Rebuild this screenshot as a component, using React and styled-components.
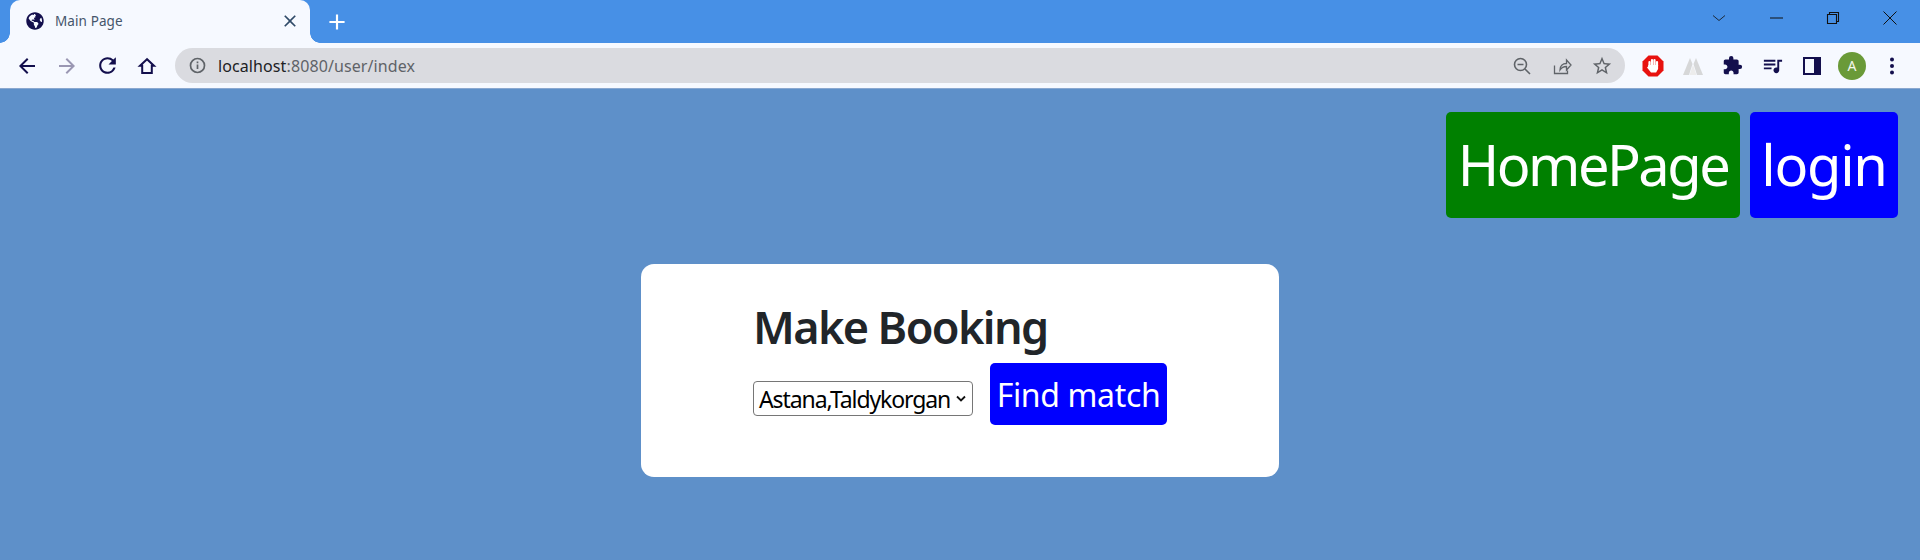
import React from "react";
import styled, { createGlobalStyle } from "styled-components";
import { MdArrowBack, MdArrowForward, MdRefresh, MdExtension, MdQueueMusic, MdStarBorder, MdClose, MdAdd } from "react-icons/md";
import { FaGlobeAmericas } from "react-icons/fa";

const N = "#130f4d";
const Global = createGlobalStyle`
  html, body { margin: 0; padding: 0; background: #5e90c9; }
  body { font-family: "Noto Sans", "Open Sans", sans-serif; overflow: hidden; }
`;
const Page = styled.div`width: 1920px; height: 560px; display: flex; flex-direction: column; overflow: hidden;`;
const TitleBar = styled.div`height: 43px; background: #4790e6; display: flex; align-items: flex-end; padding-left: 10px; flex: none;`;
const Tab = styled.div`
  width: 300px; height: 43px; box-sizing: border-box; background: #f6f9ff; border-radius: 10px 10px 0 0;
  display: flex; align-items: center; padding: 0 10px 2px 16px; position: relative;
  &::before, &::after { content: ""; position: absolute; bottom: 0; width: 10px; height: 10px; }
  &::before { left: -10px; background: radial-gradient(circle at 0 0, #4790e6 9.5px, #f6f9ff 10px); }
  &::after { right: -10px; background: radial-gradient(circle at 100% 0, #4790e6 9.5px, #f6f9ff 10px); }
`;
const TabTitle = styled.span`font-size: 13.5px; color: #45556b; margin-left: 11px; flex: 1; letter-spacing: 0.1px;`;
const NewTab = styled.div`margin-left: 12px; height: 43px; width: 30px; display: flex; align-items: center; justify-content: center;`;
const WindowControls = styled.div`margin-left: auto; height: 43px; display: flex; align-items: flex-start; padding-right: 2px;`;
const WinButton = styled.div`width: 57px; height: 36px; display: flex; align-items: center; justify-content: center;`;
const Toolbar = styled.div`height: 45px; background: #f6f9ff; display: flex; align-items: center; padding-left: 7px; flex: none; box-sizing: border-box;`;
const NavButton = styled.div`width: 40px; height: 34px; display: flex; align-items: center; justify-content: center; color: ${p => p.$c || N};`;
const UrlBar = styled.div`
  width: 1450px; height: 35px; margin-left: 8px; border-radius: 18px; background: #dadbe0; display: flex; align-items: center; padding: 0 3px 0 14px; box-sizing: border-box; flex: none;
`;
const UrlText = styled.div`font-size: 16px; color: #5f6368; margin-left: 12px; flex: 1; letter-spacing: 0.1px;`;
const Host = styled.span`color: #202124;`;
const UrlAction = styled.div`width: 40px; display: flex; align-items: center; justify-content: center; color: #5f6368;`;
const Extensions = styled.div`display: flex; align-items: center; margin-left: 8px;`;
const ExtButton = styled.div`width: 39.8px; height: 34px; display: flex; align-items: center; justify-content: center; color: ${N};`;
const Avatar = styled.div`width: 28px; height: 28px; border-radius: 50%; background: #6a9a38; color: #f3f7ec; font-size: 14px; display: flex; align-items: center; justify-content: center;`;
const Content = styled.main`flex: 1; background: #5e90c9; border-top: 1px solid #8aa8d0; display: flex; flex-direction: column; box-sizing: border-box;`;
const TopLinks = styled.nav`display: flex; justify-content: flex-end; gap: 10px; padding: 23px 22px 0 0;`;
const LinkButton = styled.a`
  height: 106px; box-sizing: border-box; display: flex; align-items: center; justify-content: center;
  background: ${p => p.$bg}; color: #fff; border-radius: 5px; font-size: 56px; font-weight: 400; font-family: "Noto Sans", sans-serif; letter-spacing: ${p => p.$ls}px; width: ${p => p.$w}px; padding-bottom: 2px;
`;
const Card = styled.section`
  width: 638px; height: 213px; box-sizing: border-box; margin: 46px auto 0; background: #fff; border-radius: 13px; padding: 33px 0 0 112px;
`;
const Heading = styled.h2`margin: 0; font-size: 45px; font-weight: 600; line-height: 60px; color: #212529; letter-spacing: -1.6px;`;
const Row = styled.div`display: flex; align-items: flex-start; gap: 17px; margin-top: 6px;`;
const CitySelect = styled.div`
  width: 220px; height: 35px; box-sizing: border-box; border: 1px solid #767676; border-radius: 4px; background: #fff;
  font-size: 23px; color: #000; display: flex; align-items: center; padding: 0 6px 0 5px; letter-spacing: -1.1px; justify-content: space-between; white-space: nowrap; margin-top: 18px; flex: none;
`;
const FindButton = styled.button`
  width: 177px; height: 62px; border: 0; border-radius: 5px; background: #0000ff; color: #fff; font-size: 32px; font-family: "Noto Sans", sans-serif; padding: 0; letter-spacing: -0.35px; white-space: nowrap; flex: none;
`;

const I = ({ w = 20, h = 20, children, vb = "0 0 20 20" }) => (
  <svg width={w} height={h} viewBox={vb} fill="none" style={{ display: "block", flex: "none" }}>{children}</svg>
);

export default function App() {
  return (
    <Page>
      <Global />
      <TitleBar>
        <Tab>
          <FaGlobeAmericas size={18} color={N} style={{ flex: "none" }} />
          <TabTitle>Main Page</TabTitle>
          <MdClose size={20} color="#2f4a68" />
        </Tab>
        <NewTab><MdAdd size={26} color="#fff" /></NewTab>
        <WindowControls>
          <WinButton><I w={14} h={14} vb="0 0 14 14"><path d="M1 4.500l6 5 6-5" stroke="#1c2a3a" strokeWidth="1" /></I></WinButton>
          <WinButton><I w={14} h={14} vb="0 0 14 14"><path d="M1 7h13" stroke="#111" strokeWidth="1" /></I></WinButton>
          <WinButton><I w={14} h={14} vb="0 0 14 14"><path d="M1.500 3.500h9v9h-9zM3.500 3.500v-2h9v9h-2" stroke="#111" strokeWidth="1.100" /></I></WinButton>
          <WinButton><I w={14} h={14} vb="0 0 14 14"><path d="M.5.5l13 13M13.500.5l-13 13" stroke="#111" strokeWidth="1" /></I></WinButton>
        </WindowControls>
      </TitleBar>
      <Toolbar>
        <NavButton><MdArrowBack size={24} /></NavButton>
        <NavButton $c="#9a97b3"><MdArrowForward size={24} /></NavButton>
        <NavButton><MdRefresh size={25} /></NavButton>
        <NavButton><I><path d="M10 3.200L3 9.800h2.200V17h9.600V9.800H17z" stroke={N} strokeWidth="2" /></I></NavButton>
        <UrlBar>
          <I w={17} h={17} vb="0 0 17 17"><circle cx="8.500" cy="8.500" r="7" stroke="#5f6368" strokeWidth="1.700" /><path d="M8.500 7.500v4.500M8.500 4.500v1.700" stroke="#5f6368" strokeWidth="1.700" /></I>
          <UrlText><Host>localhost</Host>:8080/user/index</UrlText>
          <UrlAction><I><circle cx="8.500" cy="8.500" r="6" stroke="#5f6368" strokeWidth="1.600" /><path d="M5.500 8.500h6M13 13l5 5" stroke="#5f6368" strokeWidth="1.600" /></I></UrlAction>
          <UrlAction><I><path d="M2.500 9.500v8h13v-3M8 14c0-4 2.500-6.500 6.500-6.500V4l4.500 5-4.500 5v-3.500c-3 0-5 1-6.500 3.500z" stroke="#5f6368" strokeWidth="1.300" /></I></UrlAction>
          <UrlAction><MdStarBorder size={22} /></UrlAction>
        </UrlBar>
        <Extensions>
          <ExtButton>
            <I w={22} h={22} vb="0 0 22 22">
              <path d="M6.500 0.500h9l6 6v9l-6 6h-9l-6-6v-9z" fill="#e8120f" />
              <path d="M7.500 11V7M10 10V5M12.500 10V5M15 11V7" stroke="#fff" strokeWidth="2.200" strokeLinecap="round" />
              <path d="M6.400 10h9.700v4l-2 3.500H9L5 12.500l1-1z" fill="#fff" />
            </I>
          </ExtButton>
          <ExtButton>
            <I w={22} h={20} vb="0 0 22 20"><path d="M1 19L8 2l2.500 6L7 19z" fill="#d6d7d8" /><path d="M21 19L14 2l-2.500 6L15 19z" fill="#d6d7d8" /><path d="M11 9l3.500 10h-7z" fill="#ececec" /></I>
          </ExtButton>
          <ExtButton><MdExtension size={21} /></ExtButton>
          <ExtButton><MdQueueMusic size={23} /></ExtButton>
          <ExtButton><I w={18} h={18} vb="0 0 18 18"><path fillRule="evenodd" d="M0 0h18v18H0zM2 2v14h9V2z" fill={N} /></I></ExtButton>
          <ExtButton><Avatar>A</Avatar></ExtButton>
          <ExtButton><I w={6} h={20} vb="0 0 6 20"><circle cx="3" cy="3.500" r="2" fill={N} /><circle cx="3" cy="10" r="2" fill={N} /><circle cx="3" cy="16.500" r="2" fill={N} /></I></ExtButton>
        </Extensions>
      </Toolbar>
      <Content>
        <TopLinks>
          <LinkButton $bg="#008000" $w={294} $ls={-2.5}>HomePage</LinkButton>
          <LinkButton $bg="#0000ff" $w={148} $ls={-1.3}>login</LinkButton>
        </TopLinks>
        <Card>
          <Heading>Make Booking</Heading>
          <Row>
            <CitySelect>
              <span>Astana,Taldykorgan</span>
              <I w={10} h={8} vb="0 0 10 8"><path d="M1 1.500l4 4 4-4" stroke="#111" strokeWidth="1.800" /></I>
            </CitySelect>
            <FindButton>Find match</FindButton>
          </Row>
        </Card>
      </Content>
    </Page>
  );
}
